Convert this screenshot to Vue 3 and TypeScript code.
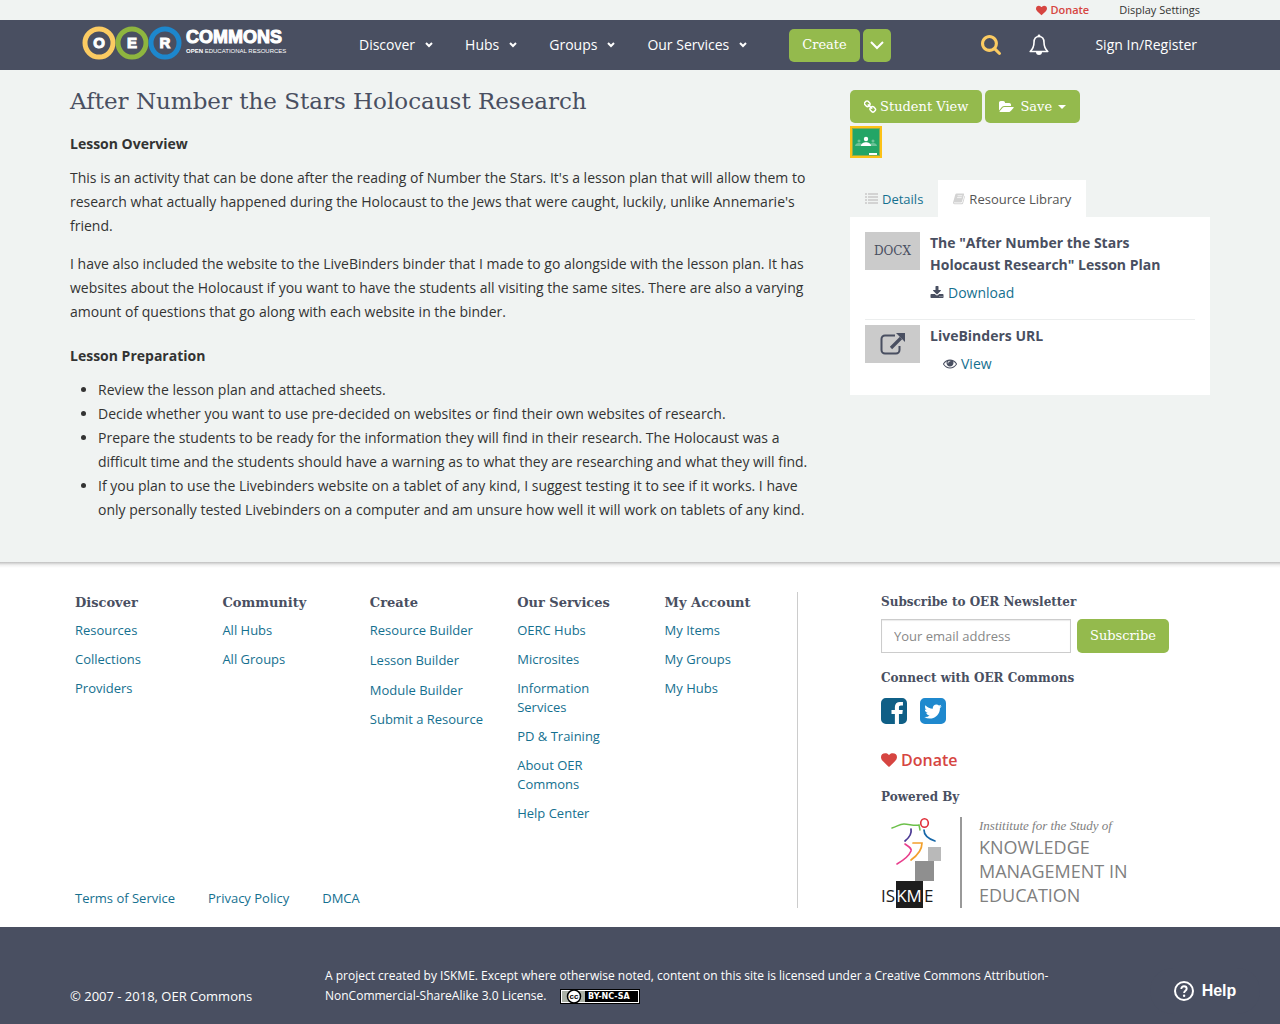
<script setup lang="ts">
interface FooterLink {
  label: string
  roomy?: boolean
}

interface FooterColumn {
  title: string
  links: FooterLink[]
}

const navItems: string[] = ['Discover', 'Hubs', 'Groups', 'Our Services']

const preparation: string[] = [
  'Review the lesson plan and attached sheets.',
  'Decide whether you want to use pre-decided on websites or find their own websites of research.',
  'Prepare the students to be ready for the information they will find in their research. The Holocaust was a difficult time and the students should have a warning as to what they are researching and what they will find.',
  'If you plan to use the Livebinders website on a tablet of any kind, I suggest testing it to see if it works. I have only personally tested Livebinders on a computer and am unsure how well it will work on tablets of any kind.',
]

const footerColumns: FooterColumn[] = [
  { title: 'Discover', links: [{ label: 'Resources' }, { label: 'Collections' }, { label: 'Providers' }] },
  { title: 'Community', links: [{ label: 'All Hubs' }, { label: 'All Groups' }] },
  {
    title: 'Create',
    links: [
      { label: 'Resource Builder', roomy: true },
      { label: 'Lesson Builder', roomy: true },
      { label: 'Module Builder' },
      { label: 'Submit a Resource' },
    ],
  },
  {
    title: 'Our Services',
    links: [
      { label: 'OERC Hubs' },
      { label: 'Microsites' },
      { label: 'Information Services' },
      { label: 'PD & Training' },
      { label: 'About OER Commons' },
      { label: 'Help Center' },
    ],
  },
  { title: 'My Account', links: [{ label: 'My Items' }, { label: 'My Groups' }, { label: 'My Hubs' }] },
]

const legalLinks: string[] = ['Terms of Service', 'Privacy Policy', 'DMCA']

const heartPath =
  'M896 1664q-26 0-44-18l-624-602q-10-8-27.5-26T145 952.5 77 855 23.5 734 0 596q0-220 127-344t351-124q62 0 126.5 21.5t120 58T820 276t76 68q36-36 76-68t95.5-68.5 120-58T1314 128q224 0 351 124t127 344q0 221-229 450l-623 600q-18 18-44 18z'
</script>

<template>
  <div class="page">
    <div class="topbar">
      <div class="container topbar-row">
        <a href="#" class="donate-small">
          <svg viewBox="0 0 1792 1792" width="11" height="11" aria-hidden="true"><path :d="heartPath" fill="currentColor" /></svg>
          Donate
        </a>
        <a href="#" class="display-settings">Display Settings</a>
      </div>
    </div>

    <header class="navbar">
      <div class="container navbar-row">
        <a href="#" class="logo" aria-label="OER Commons">
          <svg viewBox="0 0 208 36" width="208" height="36">
            <g fill="none" stroke-width="5">
              <circle cx="17" cy="18" r="14" stroke="#fbcb62" />
              <circle cx="50" cy="18" r="14" stroke="#8eb53f" />
              <circle cx="83" cy="18" r="14" stroke="#1d87cd" />
            </g>
            <g class="logo-letters" text-anchor="middle">
              <text x="17" y="23">O</text>
              <text x="50" y="23">E</text>
              <text x="83" y="23">R</text>
            </g>
            <text class="logo-name" x="104" y="18">COMMONS</text>
            <text class="logo-tag" x="104" y="28"><tspan class="logo-strong">OPEN</tspan> EDUCATIONAL RESOURCES</text>
          </svg>
        </a>
        <nav class="nav">
          <a v-for="item in navItems" :key="item" href="#" class="nav-link">
            {{ item }}
            <svg viewBox="0 0 8 6" width="8" height="6" aria-hidden="true"><path d="M1 1l3 3 3-3" fill="none" stroke="#fff" stroke-width="2" /></svg>
          </a>
        </nav>
        <div class="create-group">
          <button type="button" class="btn">Create</button>
          <button type="button" class="btn btn-toggle" aria-label="More create options">
            <svg viewBox="0 0 14 9" width="14" height="9" aria-hidden="true"><path d="M1 1l6 6 6-6" fill="none" stroke="#fff" stroke-width="2" /></svg>
          </button>
        </div>
        <div class="account">
          <a href="#" class="icon-link" aria-label="Search">
            <svg viewBox="64 128 1664 1664" width="20" height="20"><path fill="#fbcb62" d="M1216 832q0-185-131.5-316.5t-316.5-131.5-316.5 131.5-131.5 316.5 131.5 316.5 316.5 131.5 316.5-131.5 131.5-316.5zm512 832q0 52-38 90t-90 38q-54 0-90-38l-343-342q-179 124-399 124-143 0-273.5-55.5t-225-150-150-225-55.5-273.5 55.5-273.5 150-225 225-150 273.5-55.5 273.5 55.5 225 150 150 225 55.5 273.5q0 220-124 399l343 343q37 37 37 90z" /></svg>
          </a>
          <a href="#" class="icon-link" aria-label="Notifications">
            <svg viewBox="0 0 20 22" width="20" height="22"><path d="M10 2.500C6.500 2.500 5 5 5 8.500c0 4.500-1.500 6.800-3.800 9h17.600C16.500 15.300 15 13 15 8.500 15 5 13.500 2.500 10 2.500z" fill="none" stroke="#fff" stroke-width="1.600" stroke-linejoin="round" /><circle cx="10" cy="1.800" r="1.400" fill="#fff" /><path d="M7 18h6a3 3 0 0 1-6 0z" fill="#fff" /></svg>
          </a>
          <a href="#" class="sign-in">Sign In/Register</a>
        </div>
      </div>
    </header>

    <main class="container content">
      <article class="lesson">
        <h1>After Number the Stars Holocaust Research</h1>
        <h2>Lesson Overview</h2>
        <p>This is an activity that can be done after the reading of Number the Stars. It's a lesson plan that will allow them to research what actually happened during the Holocaust to the Jews that were caught, luckily, unlike Annemarie's friend.</p>
        <p>I have also included the website to the LiveBinders binder that I made to go alongside with the lesson plan. It has websites about the Holocaust if you want to have the students all visiting the same sites. There are also a varying amount of questions that go along with each website in the binder.</p>
        <h2 class="later">Lesson Preparation</h2>
        <ul>
          <li v-for="step in preparation" :key="step">{{ step }}</li>
        </ul>
      </article>

      <aside class="side">
        <div class="actions">
          <button type="button" class="btn">
            <svg viewBox="64 0 1664 1792" width="13" height="14" aria-hidden="true"><path fill="#fff" d="M1456 1216q0-40-28-68l-208-208q-28-28-68-28-42 0-72 32 3 3 19 18.500t21.500 21.500 15 19 13 25.500 3.500 27.500q0 40-28 68t-68 28q-15 0-27.500-3.500t-25.500-13-19-15-21.500-21.500-18.500-19q-33 31-33 73 0 40 28 68l206 207q27 27 68 27 40 0 68-26l147-146q28-28 28-67zm-703-705q0-40-28-68l-206-207q-28-28-68-28-39 0-68 27l-147 146q-28 28-28 67 0 40 28 68l208 208q27 27 68 27 42 0 72-31-3-3-19-18.500t-21.500-21.500-15-19-13-25.500-3.500-27.500q0-40 28-68t68-28q15 0 27.500 3.500t25.500 13 19 15 21.500 21.500 18.500 19q33-31 33-73zm895 705q0 120-85 203l-147 146q-83 83-203 83-121 0-204-85l-206-207q-83-83-83-203 0-123 88-209l-88-88q-86 88-208 88-120 0-204-84l-208-208q-84-84-84-204t85-203l147-146q83-83 203-83 121 0 204 85l206 207q83 83 83 203 0 123-88 209l88 88q86-88 208-88 120 0 204 84l208 208q84 84 84 204z" /></svg>
            Student View
          </button>
          <button type="button" class="btn btn-save">
            <svg viewBox="0 0 1920 1792" width="15" height="14" aria-hidden="true"><path fill="#fff" d="M1879 952q0 31-31 66l-336 396q-43 51-120.500 86.500t-143.500 35.500h-1088q-34 0-60.500-13t-26.500-43q0-31 31-66l336-396q43-51 120.500-86.500t143.500-35.500h1088q34 0 60.500 13t26.500 43zm-343-344v160h-832q-94 0-197 47.500t-164 119.500l-337 396-5 6q0-4-.5-12.500t-.5-12.500v-960q0-92 66-158t158-66h320q92 0 158 66t66 158v32h544q92 0 158 66t66 158z" /></svg>
            Save
            <svg viewBox="0 0 8 4" width="8" height="4" aria-hidden="true"><path d="M0 0h8l-4 4z" fill="#fff" /></svg>
          </button>
        </div>
        <a href="#" class="classroom" aria-label="Share to Google Classroom">
          <svg viewBox="0 0 32 32" width="32" height="32">
            <path fill="#fcc117" d="M0 0h32v32H0z" />
            <path fill="#8fae4b" d="M2 2h28v28H2z" />
            <path fill="#23a566" d="M3 3h26v26H3z" />
            <g fill="#6dc398"><circle cx="9" cy="15" r="1.500" /><circle cx="23" cy="15" r="1.500" /><path d="M5 20c0-4 8-4 8 0zM19 20c0-4 8-4 8 0z" /></g>
            <g fill="#fff"><circle cx="16" cy="13" r="2.200" /><path d="M11 20c0-5 10-5 10 0zM19 27h8v2h-8z" /></g>
          </svg>
        </a>

        <div class="tabs">
          <a href="#" class="tab">
            <svg viewBox="0 0 13 11" width="13" height="11" aria-hidden="true"><path fill="#d3d3d3" d="M0 0h2v2H0zM3 0h10v2H3zM0 3h2v2H0zM3 3h10v2H3zM0 6h2v2H0zM3 6h10v2H3zM0 9h2v2H0zM3 9h10v2H3z" /></svg>
            Details
          </a>
          <a href="#" class="tab tab-active">
            <svg viewBox="0 0 13 12" width="12" height="12" aria-hidden="true"><path fill="#d3d3d3" d="M4 0h7c1 0 1 .6 1 1l-2.300 8c-.2.600-.7.800-1.200.8H1.300c-.4 0-.4.800.2.800H9c.6 0 1-.3 1.200-.8L12.400 2.500c.5.300.6.700.5 1L11 10.500c-.2.700-.8 1.200-1.600 1.200H1.600C.4 11.700-.2 10.700.1 9.500L2.500 1.200C2.700.4 3.200 0 4 0z" /><path d="M5 2.500h5M4.400 4.500h5" stroke="#fff" stroke-width=".8" /></svg>
            Resource Library
          </a>
        </div>
        <section class="library">
          <div class="item">
            <div class="thumb">DOCX</div>
            <div>
              <h3>The "After Number the Stars Holocaust Research" Lesson Plan</h3>
              <div class="item-action">
                <svg viewBox="0 0 1792 1792" width="14" height="14" aria-hidden="true"><path fill="#494f61" d="M1344 1344q0-26-19-45t-45-19-45 19-19 45 19 45 45 19 45-19 19-45zm256 0q0-26-19-45t-45-19-45 19-19 45 19 45 45 19 45-19 19-45zm128-224v320q0 40-28 68t-68 28h-1472q-40 0-68-28t-28-68v-320q0-40 28-68t68-28h465l135 136q58 56 136 56t136-56l136-136h464q40 0 68 28t28 68zm-325-569q17 41-14 70l-448 448q-18 19-45 19t-45-19l-448-448q-31-29-14-70 17-39 59-39h256v-448q0-26 19-45t45-19h256q26 0 45 19t19 45v448h256q42 0 59 39z" /></svg>
                <a href="#">Download</a>
              </div>
            </div>
          </div>
          <div class="item">
            <div class="thumb">
              <svg viewBox="0 0 26 22" width="26" height="22" aria-hidden="true"><path d="M15 2.500H5a3.500 3.500 0 0 0-3.500 3.500v11A3.500 3.500 0 0 0 5 20.500h11a3.500 3.500 0 0 0 3.500-3.500v-4" fill="none" stroke="#494f61" stroke-width="2" /><path d="M11 15L21 5" stroke="#494f61" stroke-width="3.200" /><path d="M16 0h9v9z" fill="#494f61" /></svg>
            </div>
            <div>
              <h3>LiveBinders URL</h3>
              <div class="item-action item-view">
                <svg viewBox="0 64 1792 1792" width="14" height="14" aria-hidden="true"><path fill="#494f61" d="M1664 960q-152-236-381-353 61 104 61 225 0 185-131.500 316.500t-316.500 131.500-316.500-131.500-131.500-316.500q0-121 61-225-229 117-381 353 133 205 333.500 326.500t434.500 121.500 434.500-121.500 333.500-326.500zm-720-384q0-20-14-34t-34-14q-125 0-214.500 89.500t-89.500 214.500q0 20 14 34t34 14 34-14 14-34q0-86 61-147t147-61q20 0 34-14t14-34zm848 384q0 34-20 69-140 230-376.500 368.500t-499.500 138.500-499.500-139-376.500-368q-20-35-20-69t20-69q140-229 376.500-368t499.500-139 499.500 139 376.500 368q20 35 20 69z" /></svg>
                <a href="#">View</a>
              </div>
            </div>
          </div>
        </section>
      </aside>
    </main>

    <footer>
      <div class="footer-top">
        <div class="container footer-row">
          <div class="footer-left">
            <div class="footer-columns">
              <section v-for="column in footerColumns" :key="column.title">
                <h4>{{ column.title }}</h4>
                <ul>
                  <li v-for="link in column.links" :key="link.label" :class="{ roomy: link.roomy }">
                    <a href="#">{{ link.label }}</a>
                  </li>
                </ul>
              </section>
            </div>
            <div class="legal">
              <a v-for="label in legalLinks" :key="label" href="#">{{ label }}</a>
            </div>
          </div>
          <div class="footer-right">
            <form class="subscribe" @submit.prevent>
              <label for="email">Subscribe to OER Newsletter</label>
              <div class="subscribe-row">
                <input id="email" type="email" placeholder="Your email address" />
                <button type="submit" class="btn">Subscribe</button>
              </div>
            </form>
            <h5>Connect with OER Commons</h5>
            <div class="social">
              <a href="#" aria-label="Facebook">
                <svg viewBox="0 128 1536 1536" width="26" height="26"><path fill="#0f5f86" d="M1248 128q119 0 203.500 84.500T1536 416v960q0 119-84.500 203.500T1248 1664h-188v-595h199l30-232h-229V689q0-56 23.500-84t91.500-28l122-1V369q-63-9-178-9-136 0-217.500 80T820 666v171H620v232h200v595H288q-119 0-203.500-84.500T0 1376V416q0-119 84.500-203.500T288 128h960z" /></svg>
              </a>
              <a href="#" aria-label="Twitter">
                <svg viewBox="0 128 1536 1536" width="26" height="26"><path fill="#1f89ce" d="M1280 610q-56 25-121 34 68-40 93-117-65 38-134 51-61-66-153-66-87 0-148.500 61.500T755 722q0 29 5 48-129-7-242-65T326 550q-29 50-29 106 0 114 91 175-47-1-100-26v2q0 75 50 133.500t123 72.500q-29 8-51 8-13 0-39-4 21 63 74.500 104t121.500 42q-116 90-261 90-26 0-50-3 148 94 322 94 112 0 210-35.500t168-95 120.500-137 75-162T1176 746q0-18-1-27 63-45 105-109zm256-194v960q0 119-84.500 203.500T1248 1664H288q-119 0-203.500-84.500T0 1376V416q0-119 84.500-203.500T288 128h960q119 0 203.500 84.500T1536 416z" /></svg>
              </a>
            </div>
            <a href="#" class="donate-large">
              <svg viewBox="0 0 1792 1792" width="16" height="16" aria-hidden="true"><path :d="heartPath" fill="currentColor" /></svg>
              Donate
            </a>
            <h5>Powered By</h5>
            <a href="#" class="iskme">
              <svg viewBox="0 0 62 91" width="62" height="91" role="img" aria-label="ISKME">
                <g fill="none" stroke-linecap="round">
                  <ellipse cx="43.500" cy="6" rx="3.800" ry="4.300" stroke="#e0303a" stroke-width="1.600" />
                  <path d="M11 11c5-1 7-4 12-4s10 2 15 1l1 5" stroke="#6cc04a" stroke-width="1.500" />
                  <path d="M30 12c1 5-1 8-6 12" stroke="#4b3a94" stroke-width="1.700" />
                  <path d="M43 13c0 6 5 9 11 11" stroke="#1767a8" stroke-width="1.700" />
                  <path d="M24 27c4 3 7 4 6 7-2 5-7 9-14 13" stroke="#e83e8c" stroke-width="1.600" />
                  <path d="M32 26h9c0 7-4 12-11 17" stroke="#f3a02c" stroke-width="1.700" />
                </g>
                <path fill="#b9b9b9" d="M47 30h13v14H47z" />
                <path fill="#8f8f8f" d="M34 44h19v20H34z" />
                <path fill="#1d1d1d" d="M15 64h27v27H15z" />
                <text class="iskme-text" x="0" y="85" fill="#1d1d1d">IS</text>
                <text class="iskme-text" x="28" y="85" fill="#fff" text-anchor="middle">KM</text>
                <text class="iskme-text" x="43" y="85" fill="#1d1d1d">E</text>
              </svg>
              <span class="iskme-name"><em>Instititute for the Study of</em>KNOWLEDGE<br />MANAGEMENT IN<br />EDUCATION</span>
            </a>
          </div>
        </div>
      </div>
      <div class="footer-bottom">
        <div class="container bottom-row">
          <div class="copyright">© 2007 - 2018, OER Commons</div>
          <p class="license">
            A project created by ISKME. Except where otherwise noted, content on this site is licensed under a Creative Commons Attribution-NonCommercial-ShareAlike 3.0 License.
            <a href="#" class="cc" aria-label="Creative Commons BY-NC-SA">
              <svg viewBox="0 0 80 15" width="80" height="15">
                <path fill="#000" d="M0 0h80v15H0z" />
                <path fill="#fff" d="M1 1h78v13H1z" />
                <path fill="#abb1a5" d="M2 2h23v11H2z" />
                <path fill="#000" d="M25 2h53v11H25z" />
                <circle cx="14" cy="7.500" r="6.500" fill="#fff" stroke="#000" stroke-width="1.500" />
                <text class="cc-mark" x="14" y="10" text-anchor="middle">cc</text>
                <text class="cc-terms" x="28" y="10">BY-NC-SA</text>
              </svg>
            </a>
          </p>
        </div>
      </div>
    </footer>

    <button type="button" class="help">
      <svg viewBox="0 0 20 20" width="20" height="20" aria-hidden="true"><circle cx="10" cy="10" r="9" fill="none" stroke="#fff" stroke-width="2" /><path d="M7.300 8c0-1.600 1.200-2.700 2.700-2.700s2.700 1 2.700 2.500c0 1.900-2.600 2.200-2.600 4.200" fill="none" stroke="#fff" stroke-width="1.900" /><circle cx="10.100" cy="14.700" r="1.200" fill="#fff" /></svg>
      Help
    </button>
  </div>
</template>

<style>
body {
  margin: 0;
  background: #f0f3f2;
}
</style>

<style scoped>
.page {
  --ink: #494f61;
  --green: #94ba4d;
  --link: #15708f;
  --slab: "DejaVu Serif", serif;
  font: 14px/24px "Open Sans", sans-serif;
  color: #333;
}
.page * {
  box-sizing: border-box;
}
svg {
  flex: none;
}
a {
  color: var(--link);
  text-decoration: none;
}
h1, h2, h3, h4, h5, p, ul {
  margin: 0;
}
.container {
  max-width: 1140px;
  margin: 0 auto;
}

.topbar-row {
  display: flex;
  justify-content: flex-end;
  gap: 30px;
  padding-right: 10px;
  font-size: 11px;
  line-height: 20px;
}
.topbar .donate-small {
  display: flex;
  align-items: center;
  gap: 3px;
  color: #d64541;
  font-weight: 600;
}
.topbar .display-settings {
  color: #333;
}

.navbar {
  background: var(--ink);
}
.navbar-row {
  display: flex;
  align-items: center;
  height: 50px;
}
.logo {
  display: flex;
  margin: 0 69px 4px 12px;
}
.logo text {
  font-family: "Liberation Sans", Arial, sans-serif;
  fill: #fff;
}
.logo .logo-letters text {
  font-size: 15px;
  font-weight: bold;
  stroke: #fff;
  stroke-width: 1px;
}
.logo .logo-name {
  font-size: 18px;
  font-weight: bold;
  stroke: #fff;
}
.logo .logo-tag {
  font-size: 6px;
}
.logo-strong {
  font-weight: bold;
}
.nav {
  display: flex;
  gap: 32px;
}
.nav-link {
  display: flex;
  align-items: center;
  gap: 10px;
  color: #fff;
}
.create-group {
  display: flex;
  gap: 3px;
  margin-left: 42px;
}
.btn {
  display: flex;
  align-items: center;
  justify-content: center;
  gap: 3px;
  height: 33px;
  padding: 0 13px;
  border: 0;
  border-radius: 5px;
  background: var(--green);
  color: #fff;
  font: 13px/20px var(--slab);
  white-space: nowrap;
}
.btn-toggle {
  width: 28px;
  padding: 0;
}
.actions .btn {
  padding: 0 14px;
}
.actions .btn-save {
  gap: 6px;
}
.account {
  display: flex;
  align-items: center;
  margin-left: auto;
  padding-right: 13px;
}
.icon-link {
  display: flex;
  margin-right: 28px;
}
.sign-in {
  margin-left: 18px;
  color: #fff;
}

.content {
  display: grid;
  grid-template-columns: minmax(0, 1fr) 360px;
  gap: 30px;
  padding: 16px 0 40px;
}
h1 {
  margin-bottom: 16px;
  color: var(--ink);
  font: 23px/30px var(--slab);
}
h2 {
  margin-bottom: 10px;
  font-size: 14px;
  line-height: 24px;
}
.later {
  margin-top: 20px;
}
.lesson p + p {
  margin-top: 14px;
}
.lesson ul {
  padding-left: 28px;
}

.side {
  padding-top: 4px;
}
.actions {
  display: flex;
  gap: 3px;
}
.classroom {
  display: flex;
  width: 32px;
  margin: 3px 0 22px;
}
.tabs {
  display: flex;
}
.tab {
  display: flex;
  align-items: center;
  gap: 4px;
  height: 37px;
  padding: 0 15px;
  font-size: 13px;
}
.tab-active {
  background: #fff;
  color: #555;
}
.library {
  padding: 15px 15px 20px;
  background: #fff;
}
.item {
  display: flex;
  align-items: flex-start;
  gap: 10px;
}
.item + .item {
  margin-top: 15px;
  padding-top: 5px;
  border-top: 1px solid #eceeee;
}
.thumb {
  display: flex;
  flex: none;
  align-items: center;
  justify-content: center;
  width: 55px;
  height: 38px;
  background: #cbcbcb;
  color: var(--ink);
  font: 12px/20px var(--slab);
}
h3 {
  color: var(--ink);
  font-size: 14px;
  line-height: 22px;
}
.item-action {
  display: flex;
  align-items: center;
  gap: 4px;
  margin-top: 6px;
  line-height: 22px;
}
.item-view {
  margin-left: 13px;
}

.footer-top {
  padding: 30px 0 19px;
  background: linear-gradient(rgba(0, 0, 0, 0.25), rgba(0, 0, 0, 0.06) 3px, transparent 6px) #fff;
  font-size: 13px;
  line-height: 19px;
}
.footer-row {
  display: flex;
  padding: 0 5px;
}
.footer-left {
  display: flex;
  flex: 0 0 723px;
  flex-direction: column;
  justify-content: space-between;
  border-right: 1px solid #ccc;
}
.footer-columns {
  display: grid;
  grid-template-columns: repeat(5, minmax(0, 1fr));
  column-gap: 15px;
}
.footer-columns section {
  padding-right: 15px;
}
h4 {
  margin-bottom: 7px;
  color: var(--ink);
  font: bold 13px/22px var(--slab);
}
.footer-columns ul {
  padding: 0;
  list-style: none;
}
.footer-columns li {
  margin-bottom: 10px;
}
.footer-columns .roomy {
  margin-bottom: 11px;
}
.legal {
  display: flex;
  gap: 33px;
}
.footer-right {
  margin-left: 83px;
}
h5,
.subscribe label {
  display: block;
  color: var(--ink);
  font: bold 12px/21px var(--slab);
}
.subscribe {
  margin-bottom: 15px;
}
.subscribe-row {
  display: flex;
  gap: 6px;
  margin-top: 6px;
}
.subscribe .btn {
  height: 34px;
}
input {
  width: 190px;
  height: 34px;
  padding: 0 12px;
  border: 1px solid #ccc;
  border-radius: 0;
  font: 13px/20px "Open Sans", sans-serif;
  box-shadow: inset 0 1px 1px rgba(0, 0, 0, 0.08);
}
input::placeholder {
  color: #888;
}
.social {
  display: flex;
  gap: 13px;
  margin-top: 9px;
}
.social a {
  display: flex;
}
.donate-large {
  display: flex;
  align-items: center;
  gap: 4px;
  margin: 24px 0 15px;
  color: #d64541;
  font-size: 16px;
  font-weight: 600;
  line-height: 24px;
}
.iskme {
  display: flex;
  margin-top: 9px;
}
.iskme-text {
  font: 17px "Open Sans", sans-serif;
}
.iskme-name {
  margin-left: 17px;
  padding-left: 17px;
  border-left: 2px solid #999;
  color: #808080;
  font-size: 18px;
  line-height: 24px;
}
.iskme-name em {
  display: block;
  font: italic 13px/18px "Liberation Serif", serif;
}

.footer-bottom {
  padding: 39px 0 18px;
  background: var(--ink);
  color: #fff;
}
.bottom-row {
  display: flex;
  align-items: flex-end;
}
.copyright {
  flex: 0 0 255px;
  font-size: 13px;
  line-height: 20px;
}
.license {
  max-width: 750px;
  font-size: 12px;
  line-height: 20px;
}
.cc {
  display: inline-flex;
  margin-left: 10px;
  vertical-align: text-bottom;
}
.cc-mark {
  font: bold 8px "Liberation Sans", sans-serif;
}
.cc-terms {
  font: bold 8px "DejaVu Sans", sans-serif;
  fill: #fff;
}
.help {
  position: fixed;
  right: 20px;
  bottom: 10px;
  display: flex;
  align-items: center;
  justify-content: center;
  gap: 8px;
  width: 110px;
  height: 46px;
  padding: 0;
  border: 0;
  border-radius: 23px;
  background: var(--ink);
  color: #fff;
  font: bold 16px/20px "Liberation Sans", sans-serif;
}
</style>
